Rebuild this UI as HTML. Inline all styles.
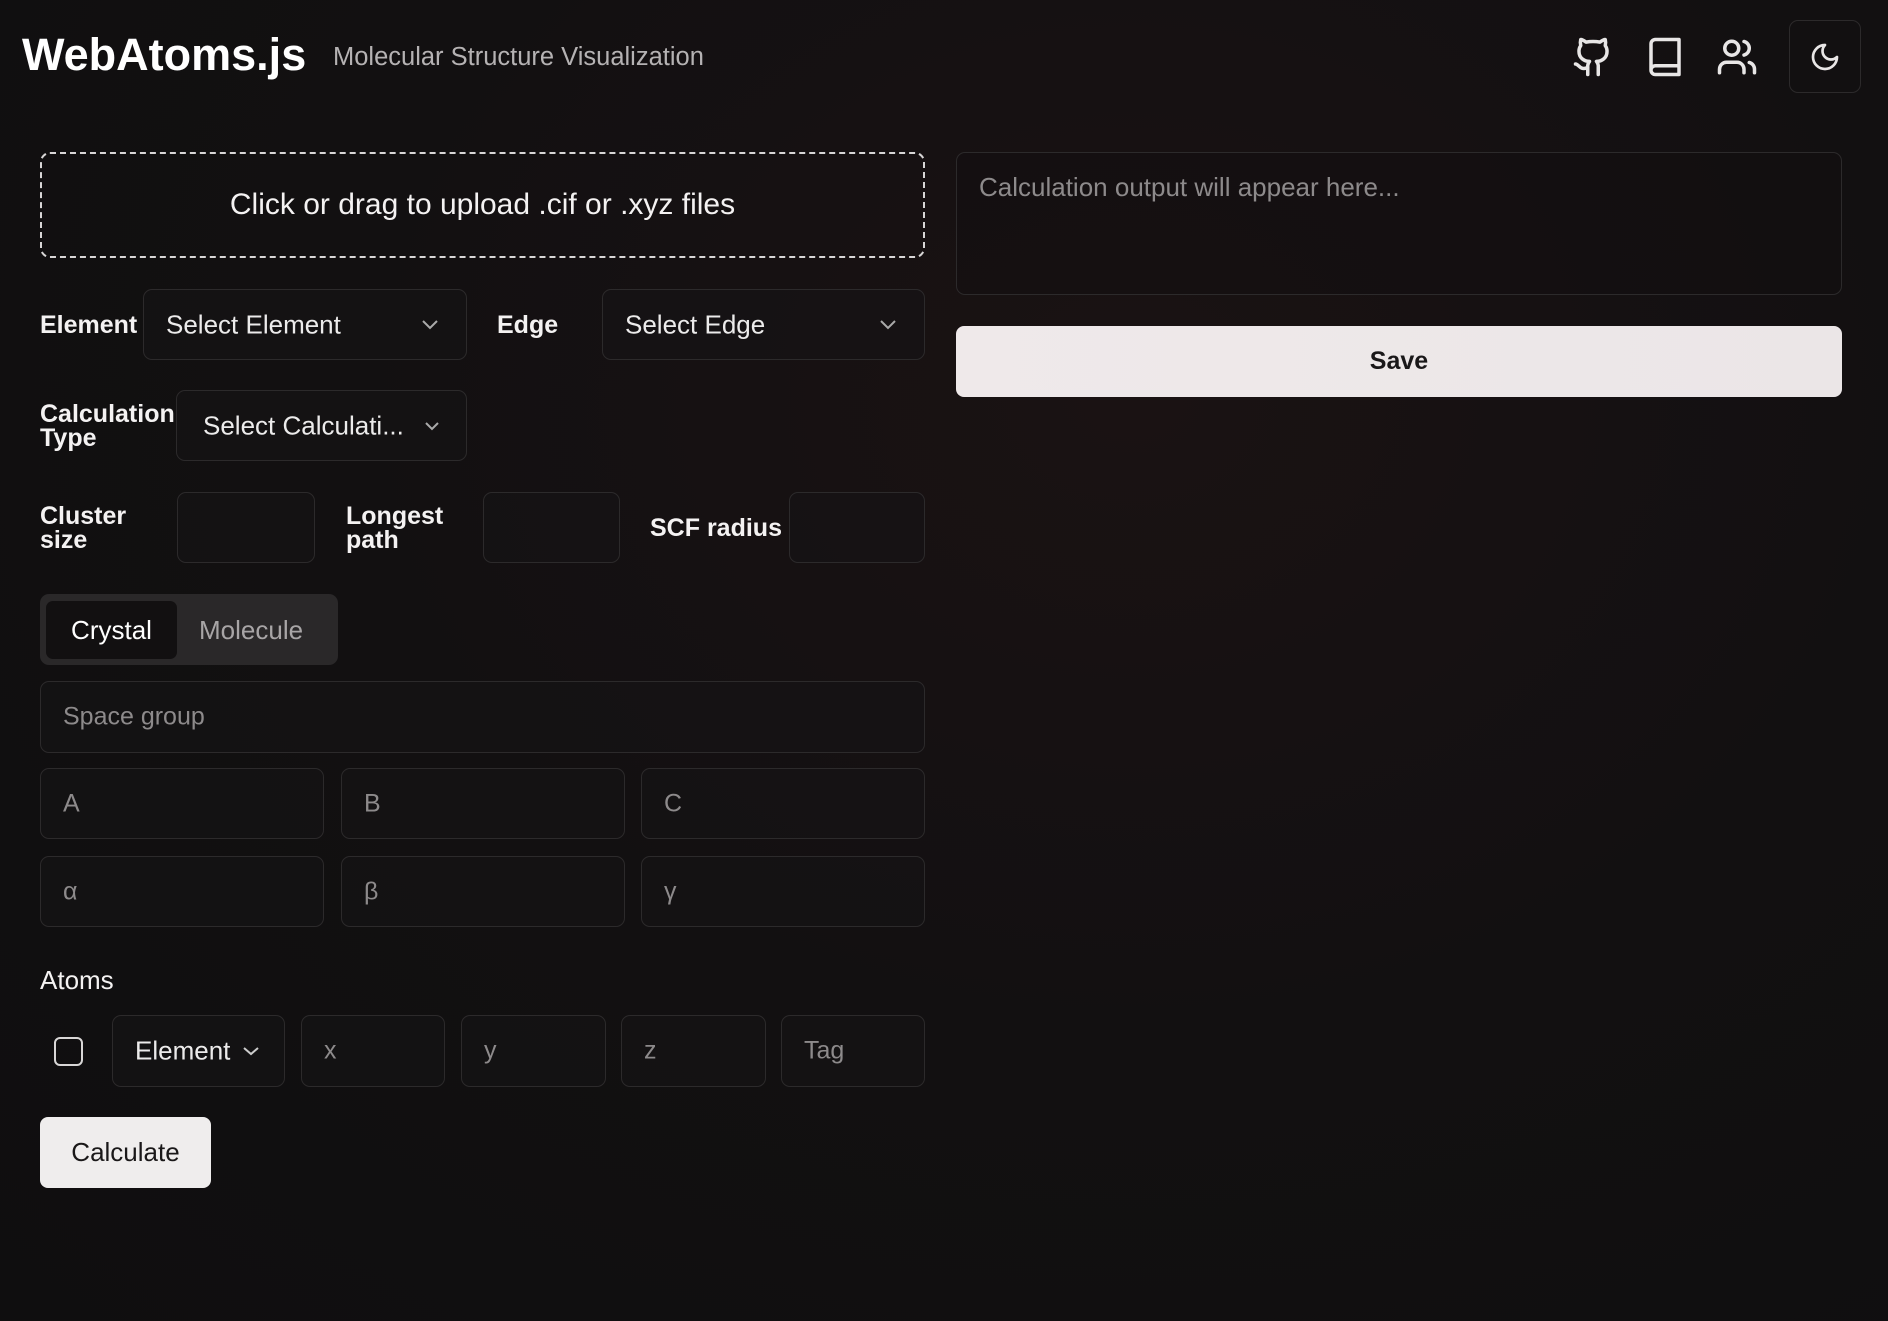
<!DOCTYPE html>
<html><head><meta charset="utf-8"><style>
*{box-sizing:border-box;margin:0;padding:0}
body{width:1888px;height:1321px;overflow:hidden;background:radial-gradient(ellipse at 60% 30%,#1a1213 0%,#121011 50%,#0f0e0f 100%);font-family:"Liberation Sans",sans-serif;color:#f2f0f0;position:relative}
.a{position:absolute}
.box{position:absolute;border:1.5px solid #2c2a2b;border-radius:9px;background:rgba(22,20,21,.6)}
.lbl{position:absolute;font-size:25px;line-height:24px;color:#f4f2f2}
.ph{color:#8d8a8b;font-size:25px;position:absolute;left:22px;top:50%;transform:translateY(-50%)}
.sel{color:#ecebeb;font-size:26px;position:absolute;left:22px;top:50%;transform:translateY(-50%)}
.chev{position:absolute;top:50%;transform:translateY(-50%)}
</style></head><body>
<div class="a" style="left:22px;top:29px;font-size:45px;font-weight:bold;color:#fff">WebAtoms.js</div>
<div class="a" style="left:333px;top:43px;font-size:25.5px;color:#b5b2b3">Molecular Structure Visualization</div>
<svg class="a" style="left:1572px;top:36px" width="42" height="42" viewBox="0 0 24 24" fill="none" stroke="#e8e6e6" stroke-width="2" stroke-linecap="round" stroke-linejoin="round"><path d="M15 22v-4a4.8 4.8 0 0 0-1-3.5c3 0 6-2 6-5.5.08-1.25-.27-2.48-1-3.5.28-1.15.28-2.35 0-3.5 0 0-1 0-3 1.5-2.640-.5-5.360-.5-8 0C6 2 5 2 5 2c-.3 1.15-.3 2.35 0 3.5A5.4 5.4 0 0 0 4 9c0 3.5 3 5.5 6 5.5-.39.49-.68 1.05-.85 1.650-.17.6-.22 1.23-.15 1.85v4"/><path d="M9 18c-4.51 2-5-2-7-2"/></svg>
<svg class="a" style="left:1644px;top:36px" width="42" height="42" viewBox="0 0 24 24" fill="none" stroke="#e8e6e6" stroke-width="2" stroke-linecap="round" stroke-linejoin="round"><path d="M4 19.5v-15A2.5 2.5 0 0 1 6.5 2H20v20H6.5a2.5 2.5 0 0 1 0-5H20"/></svg>
<svg class="a" style="left:1716px;top:36px" width="42" height="42" viewBox="0 0 24 24" fill="none" stroke="#e8e6e6" stroke-width="2" stroke-linecap="round" stroke-linejoin="round"><path d="M16 21v-2a4 4 0 0 0-4-4H6a4 4 0 0 0-4 4v2"/><circle cx="9" cy="7" r="4"/><path d="M22 21v-2a4 4 0 0 0-3-3.870"/><path d="M16 3.13a4 4 0 0 1 0 7.75"/></svg>
<div class="box" style="left:1789px;top:20px;width:72px;height:73px;background:transparent"></div>
<svg class="a" style="left:1809px;top:41px" width="32" height="32" viewBox="0 0 24 24" fill="none" stroke="#e8e6e6" stroke-width="2" stroke-linecap="round" stroke-linejoin="round"><path d="M12 3a6 6 0 0 0 9 9 9 9 0 1 1-9-9Z"/></svg>

<div class="a" style="left:40px;top:152px;width:885px;height:106px;border:2.5px dashed #d8d6d6;border-radius:10px;display:flex;align-items:center;justify-content:center;font-size:30px;color:#f4f2f2">Click or drag to upload .cif or .xyz files</div>

<div class="lbl" style="left:40px;top:313px;font-weight:bold;font-size:25px">Element</div>
<div class="box" style="left:143px;top:289px;width:324px;height:71px"><span class="sel">Select Element</span><svg class="chev" style="right:26px" width="20" height="12" viewBox="0 0 20 12"><path d="M3 2l7 7 7-7" stroke="#aaa" stroke-width="2" fill="none"/></svg></div>
<div class="lbl" style="left:497px;top:313px;font-weight:bold;font-size:25px">Edge</div>
<div class="box" style="left:602px;top:289px;width:323px;height:71px"><span class="sel">Select Edge</span><svg class="chev" style="right:26px" width="20" height="12" viewBox="0 0 20 12"><path d="M3 2l7 7 7-7" stroke="#aaa" stroke-width="2" fill="none"/></svg></div>

<div class="lbl" style="left:40px;top:402px;font-weight:bold;font-size:25px">Calculation<br>Type</div>
<div class="box" style="left:176px;top:390px;width:291px;height:71px"><span class="sel" style="left:26px">Select Calculati...</span><svg class="chev" style="right:26px" width="16" height="10" viewBox="0 0 16 10"><path d="M2 2l6 6 6-6" stroke="#aaa" stroke-width="2" fill="none"/></svg></div>

<div class="lbl" style="left:40px;top:504px;font-weight:bold;font-size:25px">Cluster<br>size</div>
<div class="box" style="left:177px;top:492px;width:138px;height:71px"></div>
<div class="lbl" style="left:346px;top:504px;font-weight:bold;font-size:25px">Longest<br>path</div>
<div class="box" style="left:483px;top:492px;width:137px;height:71px"></div>
<div class="lbl" style="left:650px;top:516px;font-weight:bold;font-size:25px">SCF radius</div>
<div class="box" style="left:789px;top:492px;width:136px;height:71px"></div>

<div class="a" style="left:40px;top:594px;width:298px;height:71px;background:#2a2829;border-radius:9px"></div>
<div class="a" style="left:46px;top:601px;width:131px;height:58px;background:#121011;border-radius:7px;font-size:26px;display:flex;align-items:center;justify-content:center;color:#fff">Crystal</div>
<div class="a" style="left:199px;top:615px;font-size:26px;color:#a8a5a6">Molecule</div>

<div class="box" style="left:40px;top:681px;width:885px;height:72px"><span class="ph">Space group</span></div>
<div class="box" style="left:40px;top:768px;width:284px;height:71px"><span class="ph">A</span></div>
<div class="box" style="left:341px;top:768px;width:284px;height:71px"><span class="ph">B</span></div>
<div class="box" style="left:641px;top:768px;width:284px;height:71px"><span class="ph">C</span></div>
<div class="box" style="left:40px;top:856px;width:284px;height:71px"><span class="ph">α</span></div>
<div class="box" style="left:341px;top:856px;width:284px;height:71px"><span class="ph">β</span></div>
<div class="box" style="left:641px;top:856px;width:284px;height:71px"><span class="ph">γ</span></div>

<div class="lbl" style="left:40px;top:968px;font-size:26px">Atoms</div>
<div class="a" style="left:54px;top:1037px;width:29px;height:29px;border:2px solid #d8d6d6;border-radius:6px"></div>
<div class="box" style="left:112px;top:1015px;width:173px;height:72px"><span class="sel">Element</span><svg class="chev" style="right:24px" width="18" height="10" viewBox="0 0 18 10"><path d="M2 2l7 6 7-6" stroke="#ccc" stroke-width="2" fill="none"/></svg></div>
<div class="box" style="left:301px;top:1015px;width:144px;height:72px"><span class="ph">x</span></div>
<div class="box" style="left:461px;top:1015px;width:145px;height:72px"><span class="ph">y</span></div>
<div class="box" style="left:621px;top:1015px;width:145px;height:72px"><span class="ph">z</span></div>
<div class="box" style="left:781px;top:1015px;width:144px;height:72px"><span class="ph">Tag</span></div>

<div class="a" style="left:40px;top:1117px;width:171px;height:71px;background:#efeded;border-radius:8px;color:#1a1819;font-size:26px;display:flex;align-items:center;justify-content:center">Calculate</div>

<div class="box" style="left:956px;top:152px;width:886px;height:143px;background:rgba(18,14,15,.5)"><span class="ph" style="top:19px;transform:none;font-size:26px">Calculation output will appear here...</span></div>
<div class="a" style="left:956px;top:326px;width:886px;height:71px;background:linear-gradient(90deg,#efe9ea,#ebe6e7);border-radius:8px;color:#1a1819;font-size:25px;font-weight:bold;display:flex;align-items:center;justify-content:center">Save</div>
</body></html>
